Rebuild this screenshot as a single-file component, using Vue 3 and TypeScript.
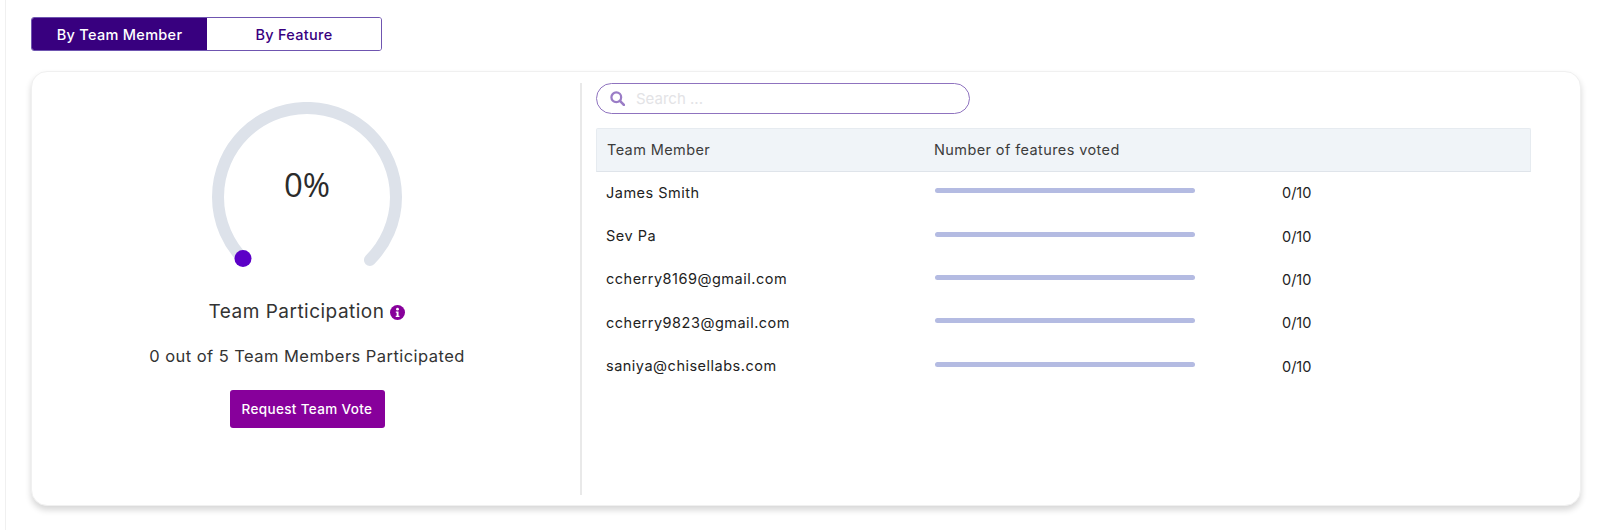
<script setup lang="ts">
const members: string[] = [
  'James Smith',
  'Sev Pa',
  'ccherry8169@gmail.com',
  'ccherry9823@gmail.com',
  'saniya@chisellabs.com',
]
</script>

<template>
  <div class="page">
    <div class="toggle">
      <button class="seg active">By Team Member</button>
      <button class="seg">By Feature</button>
    </div>

    <section class="card">
      <div class="left">
        <div class="gauge">
          <svg width="190" height="172" viewBox="0 0 190 172">
            <path d="M32.1 157.9 A89 89 0 1 1 157.9 157.9" fill="none" stroke="#dde2ea" stroke-width="12" stroke-linecap="round" />
            <circle cx="31" cy="156.5" r="8.5" fill="#5c00c7" />
          </svg>
          <div class="pct">0%</div>
        </div>
        <div class="title">
          Team Participation
          <svg class="info" width="15" height="15" viewBox="0 0 16 16">
            <circle cx="8" cy="8" r="8" fill="#87009b" />
            <circle cx="8" cy="4.4" r="1.5" fill="#fff" />
            <path d="M6.2 6.9h2.9v4.6h1v1.3H6.1v-1.3h1V8.2h-.9z" fill="#fff" />
          </svg>
        </div>
        <div class="sub">0 out of 5 Team Members Participated</div>
        <button class="cta">Request Team Vote</button>
      </div>

      <div class="right">
        <div class="search">
          <svg width="15" height="15" viewBox="0 0 16 16">
            <circle cx="6.7" cy="6.7" r="5.2" fill="none" stroke="#9a7cc6" stroke-width="2.4" />
            <path d="M10.6 10.6 L14.8 14.8" stroke="#9a7cc6" stroke-width="2.8" stroke-linecap="round" />
          </svg>
          <span class="placeholder">Search ...</span>
        </div>

        <div class="thead">
          <div class="th-name">Team Member</div>
          <div>Number of features voted</div>
        </div>

        <div v-for="m in members" :key="m" class="row">
          <div class="name">{{ m }}</div>
          <div class="bar"></div>
          <div class="val">0/10</div>
        </div>
      </div>
    </section>
  </div>
</template>

<style>
html, body { background: #fff; }
</style>

<style scoped>
.page {
  box-sizing: border-box;
  height: 530px;
  margin-left: 5px;
  border-left: 1px solid #f0f0f0;
  padding: 17px 19px 0 25px;
  font-family: Inter, "Noto Sans", sans-serif;
  color: #333;
}
.toggle {
  display: flex;
  box-sizing: border-box;
  width: 351px;
  height: 34px;
  border: 1px solid #6f55b0;
  border-radius: 3px;
  overflow: hidden;
}
.seg {
  flex: 1;
  border: 0;
  padding: 0;
  background: #fff;
  color: #38007f;
  font: 500 14.5px Inter, sans-serif;
  letter-spacing: 0.3px;
}
.seg.active {
  flex: 0 0 175px;
  background: #38007f;
  color: #fff;
}
.card {
  box-sizing: border-box;
  display: flex;
  height: 435px;
  margin-top: 20px;
  padding: 11px 0 10px;
  background: #fff;
  border: 1px solid #f0f0f0;
  border-radius: 16px;
  box-shadow: 0 4px 6px rgba(0, 0, 0, 0.16);
}
.left {
  box-sizing: border-box;
  width: 550px;
  padding: 19px 0 0 2px;
  border-right: 2px solid #e9e9e9;
  display: flex;
  flex-direction: column;
  align-items: center;
}
.gauge {
  display: grid;
  justify-items: center;
}
.gauge > * { grid-area: 1 / 1; }
.pct {
  margin-top: 61px;
  font-family: "Open Sans", sans-serif;
  font-size: 33px;
  line-height: 44px;
  color: #2b2b2b;
}
.title {
  display: flex;
  align-items: center;
  gap: 6px;
  margin-top: 24px;
  font-size: 19px;
  line-height: 28px;
  letter-spacing: 0.48px;
}
.info { margin-top: 1px; }
.sub {
  margin-top: 18px;
  font-size: 16.5px;
  line-height: 24px;
  letter-spacing: 0.45px;
}
.cta {
  width: 155px;
  height: 38px;
  margin-top: 22px;
  border: 0;
  border-radius: 3px;
  background: #87009b;
  color: #fff;
  font: 500 13.5px Inter, sans-serif;
  letter-spacing: 0.35px;
}
.right {
  flex: 1;
  padding: 0 49px 0 14px;
}
.search {
  box-sizing: border-box;
  display: flex;
  align-items: center;
  width: 374px;
  height: 31px;
  padding-left: 13px;
  border: 1px solid #8f73bf;
  border-radius: 16px;
}
.placeholder {
  margin-left: 11px;
  font-size: 15px;
  color: #e3e3e6;
}
.thead {
  box-sizing: border-box;
  display: flex;
  align-items: center;
  height: 44px;
  margin: 14px 0 -1px;
  padding: 0 0 2px 10px;
  background: #f0f4f8;
  border: 1px solid #e6ebf0;
  border-bottom-color: #dfe4ea;
  border-radius: 2px 2px 0 0;
  font-size: 14.5px;
  letter-spacing: 0.4px;
  color: #3c3c3c;
}
.th-name { width: 327px; }
.row {
  display: flex;
  align-items: center;
  height: 43.4px;
  padding-left: 10px;
  font-size: 14.5px;
  color: #222;
}
.name { width: 329px; letter-spacing: 0.5px; margin-top: -1px; }
.bar {
  width: 260px;
  height: 5px;
  margin-top: -4px;
  background: #b4bbe2;
  border-radius: 3px;
}
.val { margin-left: 87px; }
</style>
